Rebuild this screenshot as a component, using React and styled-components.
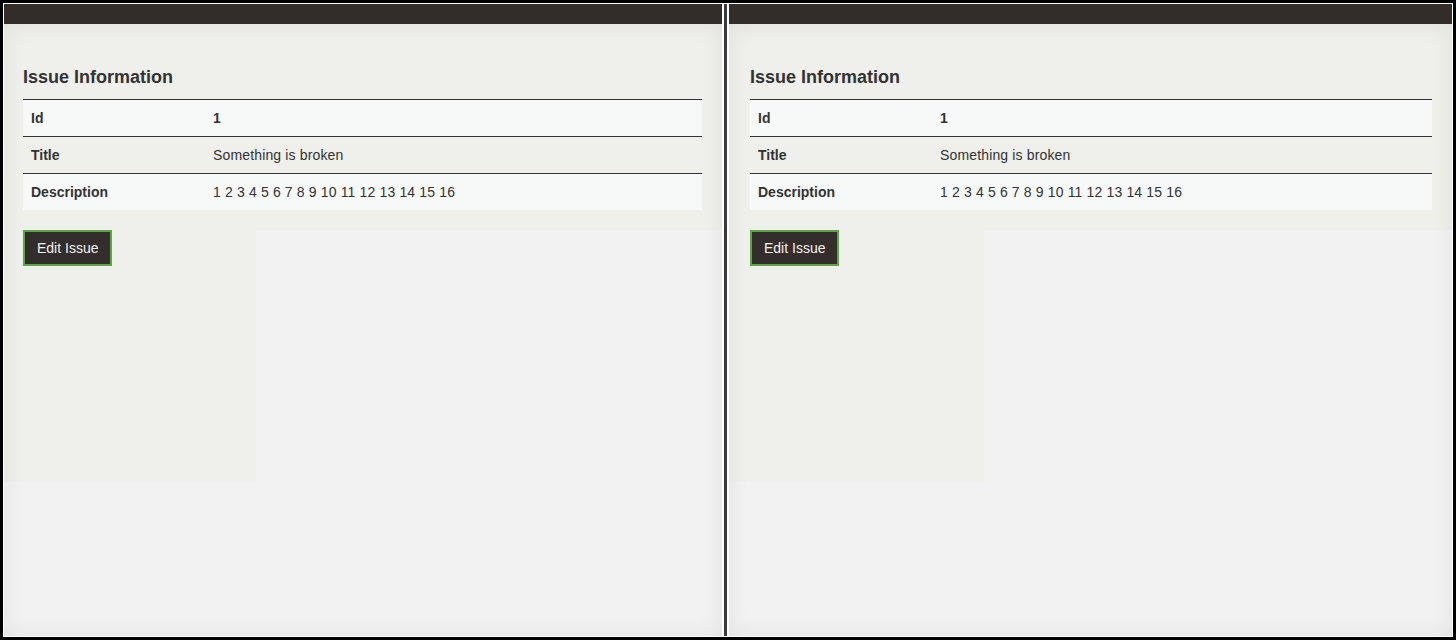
import { createGlobalStyle, styled } from "styled-components";

const GlobalStyle = createGlobalStyle`
  html, body {
    margin: 0;
    padding: 0;
    background: #000;
  }
  body {
    font-family: "Liberation Sans", Arial, sans-serif;
    color: #333;
  }
`;

const Frame = styled.div`
  width: 1456px;
  height: 640px;
  box-sizing: border-box;
  border: 3px solid #000;
  padding: 1px;
  background: #fff;
  display: flex;
`;

const Panel = styled.section`
  position: relative;
  flex: none;
  width: ${({ $width }) => $width}px;
  height: 632px;
  overflow: hidden;
  background: #f2f2f2;
  &::after {
    content: "";
    position: absolute;
    top: 20px;
    left: 0;
    right: 0;
    bottom: 0;
    pointer-events: none;
    box-shadow: inset 0 0 22px rgba(0, 0, 0, 0.07);
  }
`;

const Divider = styled.div`
  flex: none;
  width: 3px;
  margin: 0 2px;
  background: #3a3a3a;
`;

const TopBar = styled.header`
  height: 20px;
  background: #322d2b;
`;

const Content = styled.div`
  background: #efefeb;
  padding: 43px 20px 20px ${({ $inset }) => $inset}px;
`;

const Heading = styled.h2`
  margin: 0 0 11px;
  font-size: 18px;
  line-height: 21px;
  font-weight: bold;
  color: #333;
`;

const InfoTable = styled.table`
  width: 100%;
  border-collapse: collapse;
  table-layout: fixed;
  font-size: 14px;
  line-height: 16px;
`;

const Row = styled.tr`
  border-top: 1px solid #333;
  background: ${({ $shaded }) => ($shaded ? "#f7f9f8" : "transparent")};
`;

const Label = styled.th`
  width: 166px;
  padding: 10px 8px;
  text-align: left;
  font-weight: bold;
  color: #333;
`;

const Value = styled.td`
  padding: 10px 8px;
  font-weight: ${({ $bold }) => ($bold ? "bold" : "normal")};
  letter-spacing: 0.15px;
  color: #333;
`;

const Actions = styled.div`
  width: ${({ $width }) => $width}px;
  height: 252px;
  box-sizing: border-box;
  padding-left: ${({ $inset }) => $inset}px;
  background: #efefeb;
`;

const EditButton = styled.button`
  height: 36px;
  box-sizing: border-box;
  padding: 0 12px;
  border: 2px solid #5ba548;
  background: #332d2b;
  color: #f2f2f2;
  font-family: "Liberation Sans", Arial, sans-serif;
  font-size: 14px;
  cursor: pointer;
`;

const issue = {
  id: "1",
  title: "Something is broken",
  description: "1 2 3 4 5 6 7 8 9 10 11 12 13 14 15 16",
};

function IssuePanel({ width, inset, asideWidth }) {
  return (
    <Panel $width={width}>
      <TopBar />
      <Content $inset={inset}>
        <Heading>Issue Information</Heading>
        <InfoTable>
          <tbody>
            <Row $shaded>
              <Label>Id</Label>
              <Value $bold>{issue.id}</Value>
            </Row>
            <Row>
              <Label>Title</Label>
              <Value>{issue.title}</Value>
            </Row>
            <Row $shaded>
              <Label>Description</Label>
              <Value>{issue.description}</Value>
            </Row>
          </tbody>
        </InfoTable>
      </Content>
      <Actions $inset={inset} $width={asideWidth}>
        <EditButton>Edit Issue</EditButton>
      </Actions>
    </Panel>
  );
}

export default function App() {
  return (
    <>
      <GlobalStyle />
      <Frame>
        <IssuePanel width={718} inset={19} asideWidth={252} />
        <Divider />
        <IssuePanel width={723} inset={21} asideWidth={255} />
      </Frame>
    </>
  );
}
